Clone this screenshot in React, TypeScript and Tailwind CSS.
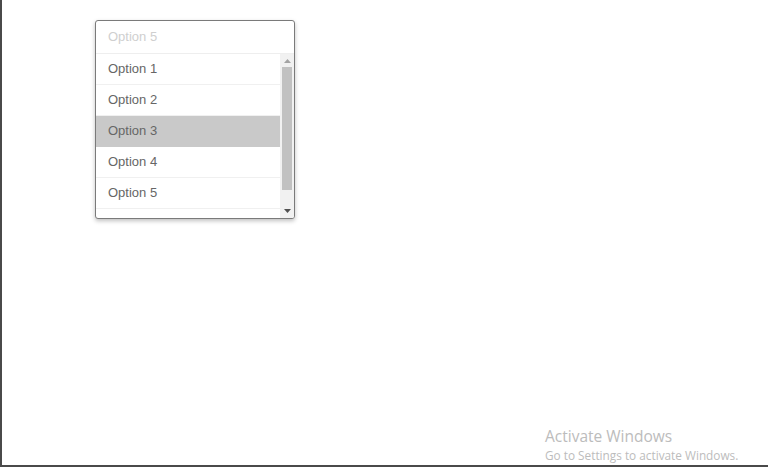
import React from "react";

const options = ["Option 1", "Option 2", "Option 3", "Option 4", "Option 5"];

const App = () => {
  return (
    <div className="relative w-[768px] h-[467px] bg-white border-l-2 border-b-2 border-[#4a4a4a] overflow-hidden font-['Liberation_Sans',Arial,sans-serif]">
      {/* Dropdown */}
      <div className="ml-[93px] mt-[20px] w-[200px] h-[199px] border border-[#7a7a7a] rounded-[3px] shadow-[0_2px_4px_rgba(0,0,0,0.25)] bg-white flex flex-col overflow-hidden">
        <div className="h-[33px] shrink-0 flex items-center px-[12px] pb-[1px] text-[13px] text-[#cfcfcf] border-b border-[#eeeeee]">
          Option 5
        </div>
        <div className="flex flex-1 min-h-0">
          <ul className="flex-1 overflow-hidden">
            {options.map((o) => (
              <li
                key={o}
                className={
                  o === "Option 3"
                    ? "h-[31px] flex items-center px-[12px] text-[13px] text-[#666] bg-[#c9c9c9] border-b border-[#c9c9c9]"
                    : "h-[31px] flex items-center px-[12px] text-[13px] text-[#666] border-b border-[#f0f0f0]"
                }
              >
                {o}
              </li>
            ))}
            <li className="h-[31px]" />
          </ul>
          {/* Scrollbar */}
          <div className="w-[14px] shrink-0 bg-[#f1f1f1] flex flex-col items-center">
            <div className="h-[13px] w-full flex items-center justify-center">
              <svg width="7" height="4" viewBox="0 0 7 4">
                <polygon points="3.5,0 7,4 0,4" fill="#a3a3a3" />
              </svg>
            </div>
            <div className="w-[10px] h-[123px] bg-[#c1c1c1]" />
            <div className="flex-1" />
            <div className="h-[14px] w-full flex items-center justify-center">
              <svg width="7" height="4" viewBox="0 0 7 4">
                <polygon points="0,0 7,0 3.5,4" fill="#505050" />
              </svg>
            </div>
          </div>
        </div>
      </div>

      {/* Windows watermark */}
      <div className="absolute left-[543px] top-[429px] text-[#bcbcbc] font-['Open_Sans',sans-serif] leading-none">
        <div className="text-[15.5px]">Activate Windows</div>
        <div className="text-[11.8px] mt-[5px]">Go to Settings to activate Windows.</div>
      </div>
    </div>
  );
};

export default App;
